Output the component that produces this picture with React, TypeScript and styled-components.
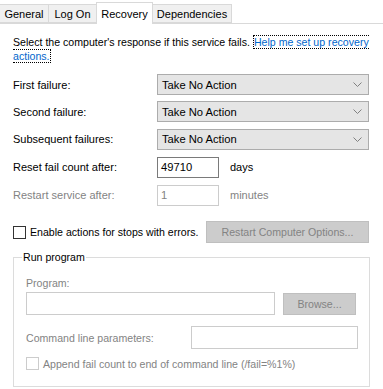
import React from 'react'
import styled, { createGlobalStyle } from 'styled-components';

const GlobalStyle = createGlobalStyle`
    html, body {
        margin: 0;
        padding: 0;
        background: #ffffff;
    }
    body {
        font-family: "Liberation Sans", Arial, sans-serif;
        font-size: 10.6px;
        color: #000;
    }
`;

const tabs = [
    { name: 'General', width: 49 },
    { name: 'Log On', width: 49 },
    { name: 'Recovery', width: 57 },
    { name: 'Dependencies', width: 80 },
];
const failures = ['First failure:', 'Second failure:', 'Subsequent failures:'];

const Chevron = () => (
    <svg width="9" height="5" viewBox="0 0 9 5">
        <path d="M0.5 0.5 L4.5 4.5 L8.5 0.5" fill="none" stroke="#808080" strokeWidth="1" />
    </svg>
);

const App = () => {
    return (
        <Window>
            <GlobalStyle />
            <TabBar>
                {tabs.map((tab) => (
                    <Tab key={tab.name} active={tab.name === 'Recovery'} width={tab.width}>{tab.name}</Tab>
                ))}
            </TabBar>
            <Panel>
                <Intro>
                    Select the computer's response if this service fails.{' '}
                    <HelpLink>Help me set up recovery actions.</HelpLink>
                </Intro>

                <FormGrid>
                    {failures.map((label) => (
                        <React.Fragment key={label}>
                            <Label>{label}</Label>
                            <Dropdown>
                                <span>Take No Action</span>
                                <Chevron />
                            </Dropdown>
                        </React.Fragment>
                    ))}
                    <Label>Reset fail count after:</Label>
                    <InlineField>
                        <NumberBox>49710</NumberBox>
                        <Unit>days</Unit>
                    </InlineField>
                    <Label disabled>Restart service after:</Label>
                    <InlineField>
                        <NumberBox disabled>1</NumberBox>
                        <Unit disabled>minutes</Unit>
                    </InlineField>
                </FormGrid>

                <ActionsRow>
                    <CheckLabel>
                        <CheckBox />
                        Enable actions for stops with errors.
                    </CheckLabel>
                    <DisabledButton width={163}>Restart Computer Options...</DisabledButton>
                </ActionsRow>

                <GroupBox>
                    <Legend>Run program</Legend>
                    <FieldCaption disabled>Program:</FieldCaption>
                    <ProgramRow>
                        <TextBox />
                        <DisabledButton width={73}>Browse...</DisabledButton>
                    </ProgramRow>
                    <ParamsRow>
                        <Label disabled>Command line parameters:</Label>
                        <TextBox />
                    </ParamsRow>
                    <CheckLabel disabled>
                        <CheckBox disabled />
                        Append fail count to end of command line (/fail=%1%)
                    </CheckLabel>
                </GroupBox>
            </Panel>
        </Window>
    )
}

const Window = styled.div`
    width: 383px;
    height: 389px;
    background: #ffffff;
    overflow: hidden;
`;

const TabBar = styled.div`
    display: flex;
    align-items: flex-end;
    height: 24px;
    border-bottom: 1px solid #d9d9d9;
    box-sizing: border-box;
`;

const Tab = styled.div<{ active?: boolean; width: number }>`
    box-sizing: border-box;
    width: ${(props) => props.width}px;
    height: ${(props) => props.active ? '22px' : '19px'};
    margin-bottom: ${(props) => props.active ? '-1px' : '0'};
    display: flex;
    align-items: center;
    justify-content: center;
    background: ${(props) => props.active ? '#ffffff' : '#f0f0f0'};
    border: 1px solid #d9d9d9;
    border-bottom: ${(props) => props.active ? 'none' : '1px solid #d9d9d9'};
    margin-left: -1px;
    font-size: 11px;
    white-space: nowrap;

    &:first-child {
        margin-left: 0;
        border-left: none;
    }
`;

const Panel = styled.div`
    padding: 0 13px 0 13px;
`;

const Intro = styled.p`
    margin: 11px 0 0 0;
    line-height: 14px;
`;

const HelpLink = styled.span`
    color: #0066cc;
    border: 1px dotted #000;
`;

const FormGrid = styled.div`
    display: grid;
    grid-template-columns: 144px 212px;
    grid-template-rows: 21px 21px 22px 22px 22px;
    row-gap: 6px;
    align-items: center;
    margin-top: 11px;
    font-size: 11px;
`;

const Label = styled.div<{ disabled?: boolean }>`
    color: ${(props) => props.disabled ? '#838383' : '#000'};
    white-space: nowrap;
`;

const FieldCaption = styled(Label)`
    margin-top: 13px;
`;

const Dropdown = styled.div`
    box-sizing: border-box;
    height: 21px;
    display: flex;
    align-items: center;
    justify-content: space-between;
    padding: 0 6px 0 4px;
    background: #e5e5e5;
    border: 1px solid #acacac;
    font-size: 11.2px;
`;

const InlineField = styled.div`
    display: flex;
    align-items: center;
    gap: 11px;
`;

const NumberBox = styled.div<{ disabled?: boolean }>`
    box-sizing: border-box;
    width: 62px;
    height: 21px;
    padding: 0 3px;
    display: flex;
    align-items: center;
    border: 1px solid ${(props) => props.disabled ? '#cccccc' : '#7a7a7a'};
    color: ${(props) => props.disabled ? '#838383' : '#000'};
    background: #fff;
    font-size: 11.2px;
`;

const Unit = styled.span<{ disabled?: boolean }>`
    color: ${(props) => props.disabled ? '#838383' : '#000'};
`;

const ActionsRow = styled.div`
    display: flex;
    align-items: center;
    justify-content: space-between;
    width: 356px;
    margin-top: 15px;
`;

const CheckLabel = styled.label<{ disabled?: boolean }>`
    display: flex;
    align-items: center;
    gap: 4px;
    color: ${(props) => props.disabled ? '#838383' : '#000'};
`;

const CheckBox = styled.span<{ disabled?: boolean }>`
    box-sizing: border-box;
    width: 13px;
    height: 13px;
    border: 1px solid ${(props) => props.disabled ? '#cccccc' : '#333333'};
    background: #fff;
`;

const DisabledButton = styled.div<{ width: number }>`
    box-sizing: border-box;
    width: ${(props) => props.width}px;
    height: 22px;
    display: flex;
    align-items: center;
    justify-content: center;
    background: #cccccc;
    border: 1px solid #bfbfbf;
    color: #838383;
    white-space: nowrap;
`;

const GroupBox = styled.fieldset`
    box-sizing: border-box;
    width: 357px;
    margin: 7px 0 0 0;
    padding: 0 13px 16px 12px;
    border: 1px solid #dcdcdc;
    min-inline-size: 0;
`;

const Legend = styled.legend`
    margin-left: -4px;
    padding: 0 1px;
    line-height: 14px;
    color: #000;
`;

const ProgramRow = styled.div`
    display: flex;
    align-items: center;
    gap: 8px;
    margin-top: 3px;
`;

const TextBox = styled.div`
    box-sizing: border-box;
    flex: 1;
    height: 23px;
    border: 1px solid #cccccc;
    background: #fff;
`;

const ParamsRow = styled.div`
    display: grid;
    grid-template-columns: 165px 1fr;
    align-items: center;
    margin-top: 11px;
    margin-right: -2px;
    margin-bottom: 8px;
`;

export default App;
